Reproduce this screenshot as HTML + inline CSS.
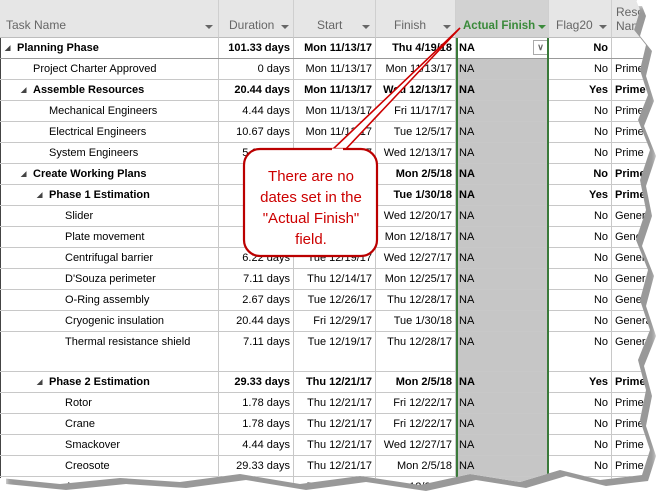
<!DOCTYPE html>
<html><head><meta charset="utf-8"><style>
*{margin:0;padding:0;box-sizing:border-box}
body{width:663px;height:503px;background:#fff;position:relative;overflow:hidden;font-family:"Liberation Sans",Arial,sans-serif;font-size:11px;color:#000}
#shadow{position:absolute;left:6px;top:6px;width:650px;height:490px;background:#999;filter:blur(3px);
clip-path:polygon(0 0,636px 0,640px 10px,634px 30px,646px 45px,640px 70px,648px 95px,638px 120px,650px 150px,640px 180px,646px 210px,636px 240px,648px 270px,640px 300px,650px 330px,638px 360px,646px 390px,640px 420px,650px 450px,642px 475px,600px 480px,560px 470px,520px 482px,470px 474px,420px 485px,360px 476px,300px 484px,240px 474px,180px 482px,120px 478px,60px 484px,0 478px)}
#sheet{position:absolute;left:0;top:0;width:663px;height:503px;background:#fff;
clip-path:polygon(0 0,636px 0,640px 10px,634px 30px,646px 45px,640px 70px,648px 95px,638px 120px,650px 150px,640px 180px,646px 210px,636px 240px,648px 270px,640px 300px,650px 330px,638px 360px,646px 390px,640px 420px,650px 450px,642px 475px,600px 480px,560px 470px,520px 482px,470px 474px,420px 485px,360px 476px,300px 484px,240px 474px,180px 482px,120px 478px,60px 484px,0 478px)}
.hd{position:absolute;top:0;height:38px;background:#e6e6e6;border-right:1px solid #cfcfcf;border-bottom:1px solid #bdbdbd;color:#666;font-size:12px}
.hd span{position:absolute;bottom:5px}
.arr{position:absolute;bottom:8px;width:0;height:0;border-left:4px solid transparent;border-right:4px solid transparent;border-top:4px solid #666}
.r{position:absolute;left:0;width:663px;border-bottom:1px solid #c8c8c8;white-space:nowrap}
.c{position:absolute;top:0;height:100%;border-right:1px solid #c8c8c8;padding-top:4px;overflow:hidden}
.b{font-weight:bold}
.rt{text-align:right;padding-right:3px}
.tri{position:absolute;font-size:7px;color:#444;top:6px}
</style></head><body>
<div id="shadow"></div>
<div id="sheet">
<div style="position:absolute;left:0;top:0;width:1px;height:503px;background:#444"></div>
<div style="position:absolute;left:0;top:0;width:663px;height:1px;background:#444"></div>
<div class="hd" style="left:0;width:219px"><span style="left:6px">Task Name</span><i class="arr" style="left:205px"></i></div>
<div class="hd" style="left:219px;width:75px"><span style="left:10px">Duration</span><i class="arr" style="left:62px"></i></div>
<div class="hd" style="left:294px;width:82px"><span style="left:23px">Start</span><i class="arr" style="left:68px"></i></div>
<div class="hd" style="left:376px;width:80px"><span style="left:18px">Finish</span><i class="arr" style="left:67px"></i></div>
<div class="hd" style="left:456px;width:93px;background:#d2d2d2"><span style="left:7px;color:#3a8a3a;font-weight:bold;font-size:11.5px">Actual Finish</span><i class="arr" style="left:82px;border-top-color:#3a8a3a"></i></div>
<div class="hd" style="left:549px;width:63px"><span style="left:7px">Flag20</span><i class="arr" style="left:50px"></i></div>
<div class="hd" style="left:612px;width:51px"><span style="left:4px;bottom:4px;line-height:14px">Resou<br>Nam</span></div>
<div id="rows"></div>
<div style="position:absolute;left:456px;top:38px;width:93px;height:460px;border:2px solid #3a7a3a;border-top:none;pointer-events:none"></div>
</div>
<svg style="position:absolute;left:0;top:0" width="663" height="503">
<path d="M331,151 L460,28 L344,151" fill="#fff" stroke="#c00" stroke-width="1.6"/>
<rect x="244" y="149" width="133" height="107" rx="16" fill="#fff" stroke="#b00" stroke-width="2.2"/>
<path d="M332,150 L343,150" stroke="#fff" stroke-width="3"/>
<text font-family="Liberation Sans,Arial,sans-serif" font-size="15" fill="#c00" text-anchor="middle">
<tspan x="311" y="181">There are no</tspan><tspan x="311" y="202">dates set in the</tspan><tspan x="311" y="223">"Actual Finish"</tspan><tspan x="311" y="244">field.</tspan></text>
</svg>
<script>
var D=[
["Planning Phase",17,1,"101.33 days","Mon 11/13/17","Thu 4/19/18","No",""],
["Project Charter Approved",33,0,"0 days","Mon 11/13/17","Mon 11/13/17","No","Prime"],
["Assemble Resources",33,1,"20.44 days","Mon 11/13/17","Wed 12/13/17","Yes","Prime"],
["Mechanical Engineers",49,0,"4.44 days","Mon 11/13/17","Fri 11/17/17","No","Prime"],
["Electrical Engineers",49,0,"10.67 days","Mon 11/13/17","Tue 12/5/17","No","Prime"],
["System Engineers",49,0,"5.00 days","Mon 11/13/17","Wed 12/13/17","No","Prime"],
["Create Working Plans",33,1,"36 days","Thu 12/14/17","Mon 2/5/18","No","Prime"],
["Phase 1 Estimation",49,1,"32 days","Thu 12/14/17","Tue 1/30/18","Yes","Prime"],
["Slider",65,0,"4 days","Thu 12/14/17","Wed 12/20/17","No","General"],
["Plate movement",65,0,"3 days","Thu 12/14/17","Mon 12/18/17","No","General"],
["Centrifugal barrier",65,0,"6.22 days","Tue 12/19/17","Wed 12/27/17","No","General"],
["D'Souza perimeter",65,0,"7.11 days","Thu 12/14/17","Mon 12/25/17","No","General"],
["O-Ring assembly",65,0,"2.67 days","Tue 12/26/17","Thu 12/28/17","No","General"],
["Cryogenic insulation",65,0,"20.44 days","Fri 12/29/17","Tue 1/30/18","No","General"],
["Thermal resistance shield",65,0,"7.11 days","Tue 12/19/17","Thu 12/28/17","No","General",40],
["Phase 2 Estimation",49,1,"29.33 days","Thu 12/21/17","Mon 2/5/18","Yes","Prime"],
["Rotor",65,0,"1.78 days","Thu 12/21/17","Fri 12/22/17","No","Prime"],
["Crane",65,0,"1.78 days","Thu 12/21/17","Fri 12/22/17","No","Prime"],
["Smackover",65,0,"4.44 days","Thu 12/21/17","Wed 12/27/17","No","Prime"],
["Creosote",65,0,"29.33 days","Thu 12/21/17","Mon 2/5/18","No","Prime"],
["Armature wrapping",65,0,"1.78 days","Thu 12/21/17","Tue 12/26/17","No","Prime"]];
var y=38,h="";
D.forEach(function(d,i){
var ht=d[8]||21,b=d[2]?" b":"";
var pad=d[1];
var tri=d[2]?'<span class="tri" style="left:'+(pad-12)+'px">&#9698;</span>':'';
var bs=i==0?"border-bottom:1px solid #999;":"";
var af=i==0?'<div style="position:absolute;left:459px;top:0;width:89px;height:20px;background:#fff"></div><div class="c b" style="left:459px;width:80px;border:none">NA</div><div style="position:absolute;left:533px;top:2px;width:15px;height:15px;border:1px solid #aaa;background:#fff;font-size:9px;color:#666;text-align:center;line-height:12px">&#8744;</div>':'<div style="position:absolute;left:458px;top:0;width:90px;height:100%;background:#c6c6c6"></div><div class="c'+b+'" style="left:459px;width:80px;border:none">NA</div>';
h+='<div class="r'+b+'" style="top:'+y+'px;height:'+ht+'px;'+bs+'">'+
'<div class="c" style="left:0;width:219px;padding-left:'+pad+'px">'+tri+d[0]+'</div>'+
'<div class="c rt" style="left:219px;width:75px">'+d[3]+'</div>'+
'<div class="c rt" style="left:294px;width:82px">'+d[4]+'</div>'+
'<div class="c rt" style="left:376px;width:80px">'+d[5]+'</div>'+af+
'<div class="c rt" style="left:549px;width:63px">'+d[6]+'</div>'+
'<div class="c" style="left:612px;width:51px;padding-left:3px;border:none">'+d[7]+'</div></div>';
y+=ht;});
document.getElementById("rows").innerHTML=h;
</script>
</body></html>
